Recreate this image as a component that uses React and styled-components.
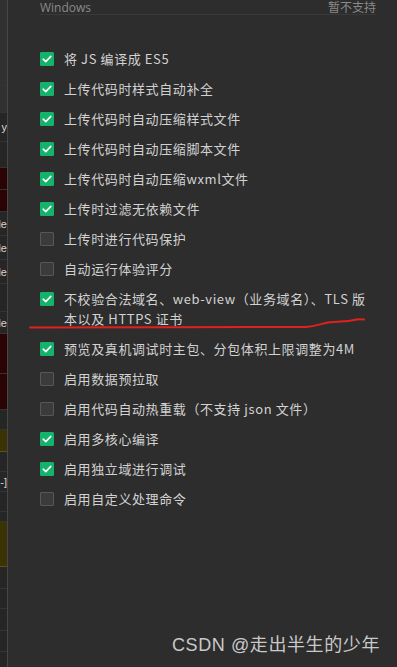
import React from "react";
import styled, { createGlobalStyle } from "styled-components";

const Global = createGlobalStyle`
  html, body { margin: 0; padding: 0; background: #2d2d2d; }
  body { font-family: "Noto Sans CJK SC", "Noto Sans", sans-serif; }
`;

const Page = styled.div`
  position: relative;
  display: flex;
  width: 397px;
  height: 667px;
  overflow: hidden;
  background: #2d2d2d;
`;

const LeftStrip = styled.div`
  width: 7px;
  flex: none;
  display: flex;
  flex-direction: column;
  border-right: 1px solid #474747;
  background: #262626;
  overflow: hidden;
`;

const toneColors = {
  base: "#262626",
  light: "#313131",
  red: "#2a0405",
  yellow: "#3a3404",
};

const Cell = styled.div`
  height: ${(p) => p.$h}px;
  flex: none;
  background: ${(p) => toneColors[p.$tone || "base"]};
  border-bottom: 1px solid ${(p) => (p.$tone === "yellow" ? "#5a5214" : "#343434")};
  box-sizing: border-box;
  display: flex;
  align-items: center;
  justify-content: flex-end;
  font-family: "Liberation Sans", sans-serif;
  font-size: 11px;
  color: #d6d6d6;
  white-space: nowrap;
  overflow: hidden;
`;

const Panel = styled.div`
  flex: 1;
  padding: 0 21px 0 32px;
  box-sizing: border-box;
`;

const HeaderRow = styled.div`
  display: flex;
  justify-content: space-between;
  align-items: center;
  height: 18px;
  margin-top: -3px;
  padding-top: 4px;
  box-sizing: border-box;
  border-bottom: 1px solid #393939;
  font-size: 12px;
  line-height: 14px;
  color: #8a8a8a;
  font-family: "Open Sans", "Noto Sans CJK SC", sans-serif;
`;

const List = styled.div`
  margin-top: 29px;
  display: flex;
  flex-direction: column;
`;

const Row = styled.label`
  display: flex;
  align-items: flex-start;
  padding: 5px 0;
  line-height: 20px;
`;

const Box = styled.span`
  flex: none;
  width: 14px;
  height: 14px;
  margin-top: 3px;
  box-sizing: border-box;
  border-radius: 1px;
  display: flex;
  align-items: center;
  justify-content: center;
  background: ${(p) => (p.$checked ? "#15b26b" : "#3b3b3b")};
  border: 1px solid ${(p) => (p.$checked ? "#15b26b" : "#575757")};
`;

const Label = styled.span`
  margin-left: 10px;
  font-size: 13px;
  letter-spacing: 0.6px;
  color: #d2d2d2;
`;

const Underline = styled.svg`
  position: absolute;
  left: 28px;
  top: 314px;
  pointer-events: none;
`;

const Watermark = styled.div`
  position: absolute;
  right: 17px;
  bottom: 11px;
  font-family: "Liberation Sans", "Noto Sans CJK SC", sans-serif;
  font-size: 18px;
  letter-spacing: 0.6px;
  color: #c9c9c9;
  pointer-events: none;
`;

const Check = () => (
  <svg width="10" height="8" viewBox="0 0 10 8">
    <path d="M1.2 4.2 L3.8 6.6 L8.8 1.4" fill="none" stroke="#ffffff" strokeWidth="1.6" strokeLinecap="round" strokeLinejoin="round" />
  </svg>
);

const items = [
  ["将 JS 编译成 ES5", true],
  ["上传代码时样式自动补全", true],
  ["上传代码时自动压缩样式文件", true],
  ["上传代码时自动压缩脚本文件", true],
  ["上传代码时自动压缩wxml文件", true],
  ["上传时过滤无依赖文件", true],
  ["上传时进行代码保护", false],
  ["自动运行体验评分", false],
  ["不校验合法域名、web-view（业务域名）、TLS 版本以及 HTTPS 证书", true],
  ["预览及真机调试时主包、分包体积上限调整为4M", true],
  ["启用数据预拉取", false],
  ["启用代码自动热重载（不支持 json 文件）", false],
  ["启用多核心编译", true],
  ["启用独立域进行调试", true],
  ["启用自定义处理命令", false],
];

const strip = [
  [86, "light"],
  [27, "light"],
  [29, "base", "y"],
  [26, "base"],
  [22, "red"],
  [22, "red"],
  [24, "base", "de"],
  [24, "base", "de"],
  [24, "base", "de"],
  [28, "base"],
  [22, "base", "de"],
  [40, "red"],
  [36, "red"],
  [20, "base"],
  [22, "yellow"],
  [20, "base"],
  [20, "base", "-]"],
  [20, "base"],
  [10, "base"],
  [45, "yellow"],
  [22, "base"],
  [20, "base"],
  [22, "base"],
  [21, "base"],
  [30, "base"],
];

export default function App() {
  return (
    <>
      <Global />
      <Page>
        <LeftStrip>
          {strip.map(([h, tone, text], i) => (
            <Cell key={i} $h={h} $tone={tone}>
              {text}
            </Cell>
          ))}
        </LeftStrip>
        <Panel>
          <HeaderRow>
            <span>Windows</span>
            <span>暂不支持</span>
          </HeaderRow>
          <List>
            {items.map(([text, checked], i) => (
              <Row key={i}>
                <Box $checked={checked}>{checked && <Check />}</Box>
                <Label>{text}</Label>
              </Row>
            ))}
          </List>
        </Panel>
        <Underline width="340" height="18" viewBox="0 0 340 18">
          <path
            d="M2 13.5 C80 13.2 200 13.4 278 13 C288 12.5 292 10 300 8.5 C312 7 318 8 326 6 C330 5 334 5.2 336 5.5"
            fill="none"
            stroke="#e0221f"
            strokeWidth="2"
            strokeLinecap="round"
          />
        </Underline>
        <Watermark>CSDN @走出半生的少年</Watermark>
      </Page>
    </>
  );
}
